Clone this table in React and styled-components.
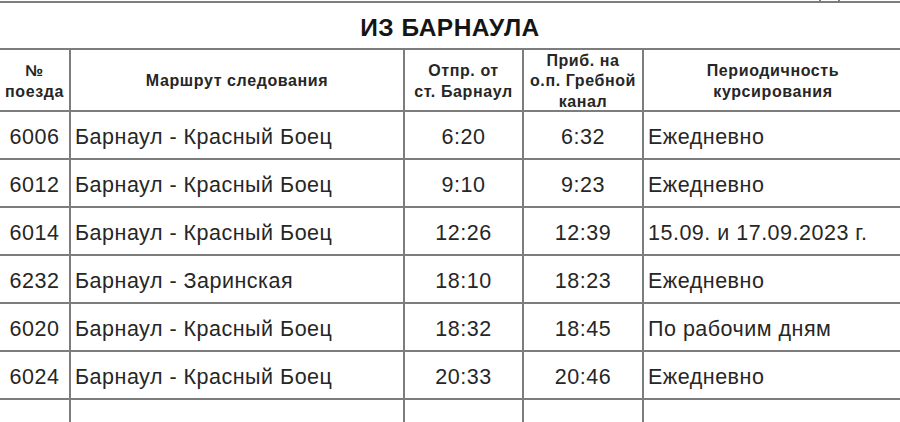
import React from "react";
import styled, { createGlobalStyle } from "styled-components";

const Global = createGlobalStyle`
  html, body { margin: 0; padding: 0; background: #fff; }
  body { font-family: "Liberation Sans", Arial, sans-serif; }
`;

const Page = styled.div`
  width: 900px;
  height: 422px;
  overflow: hidden;
  background: #fff;
`;

const PrevEdge = styled.div`
  display: grid;
  grid-template-columns: 819px 17px 1fr;
  column-gap: 2px;
  padding-bottom: 2px;
  background: #7d7d7d;
  width: 904px;
`;

const PrevCell = styled.div`
  height: 1px;
  background: #fff;
`;

const Title = styled.h1`
  margin: 0;
  height: 45px;
  box-sizing: border-box;
  padding-top: 4px;
  display: flex;
  align-items: center;
  justify-content: center;
  font-size: 24.5px;
  font-weight: 700;
  letter-spacing: 0.5px;
  color: #151515;
`;

const Grid = styled.div`
  display: grid;
  grid-template-columns: 69px 332px 117px 118px 258px;
  grid-auto-rows: 46px;
  grid-template-rows: 60px;
  gap: 2px;
  padding-top: 2px;
  background: #7d7d7d;
  width: 902px;
`;

const HeadCell = styled.div`
  background: #fff;
  display: flex;
  align-items: center;
  justify-content: center;
  text-align: center;
  box-sizing: border-box;
  padding-top: 3px;
  font-size: 16px;
  line-height: 20.5px;
  font-weight: 700;
  letter-spacing: 0.6px;
  color: #262626;
`;

const Cell = styled.div`
  background: #fff;
  display: flex;
  align-items: center;
  justify-content: ${(p) => (p.$left ? "flex-start" : "center")};
  box-sizing: border-box;
  padding: 4px ${(p) => (p.$left ? "0 0 4px" : "0 0 0")};
  font-size: 21.5px;
  letter-spacing: 0.5px;
  color: #262626;
  white-space: nowrap;
`;

const header = [
  ["№", "поезда"],
  ["Маршрут следования"],
  ["Отпр. от", "ст. Барнаул"],
  ["Приб. на", "о.п. Гребной", "канал"],
  ["Периодичность", "курсирования"],
];

const rows = [
  ["6006", "Барнаул - Красный Боец", "6:20", "6:32", "Ежедневно"],
  ["6012", "Барнаул - Красный Боец", "9:10", "9:23", "Ежедневно"],
  ["6014", "Барнаул - Красный Боец", "12:26", "12:39", "15.09. и 17.09.2023 г."],
  ["6232", "Барнаул - Заринская", "18:10", "18:23", "Ежедневно"],
  ["6020", "Барнаул - Красный Боец", "18:32", "18:45", "По рабочим дням"],
  ["6024", "Барнаул - Красный Боец", "20:33", "20:46", "Ежедневно"],
  ["", "", "", "", ""],
];

const leftCols = [false, true, false, false, true];

export default function App() {
  return (
    <Page>
      <Global />
      <PrevEdge>
        <PrevCell />
        <PrevCell />
        <PrevCell />
      </PrevEdge>
      <Title>ИЗ БАРНАУЛА</Title>
      <Grid>
        {header.map((lines, i) => (
          <HeadCell key={"h" + i}>
            <div>
              {lines.map((l, j) => (
                <div key={j}>{l}</div>
              ))}
            </div>
          </HeadCell>
        ))}
        {rows.map((r, ri) =>
          r.map((v, ci) => (
            <Cell key={ri + "-" + ci} $left={leftCols[ci]}>
              {v}
            </Cell>
          ))
        )}
      </Grid>
    </Page>
  );
}
